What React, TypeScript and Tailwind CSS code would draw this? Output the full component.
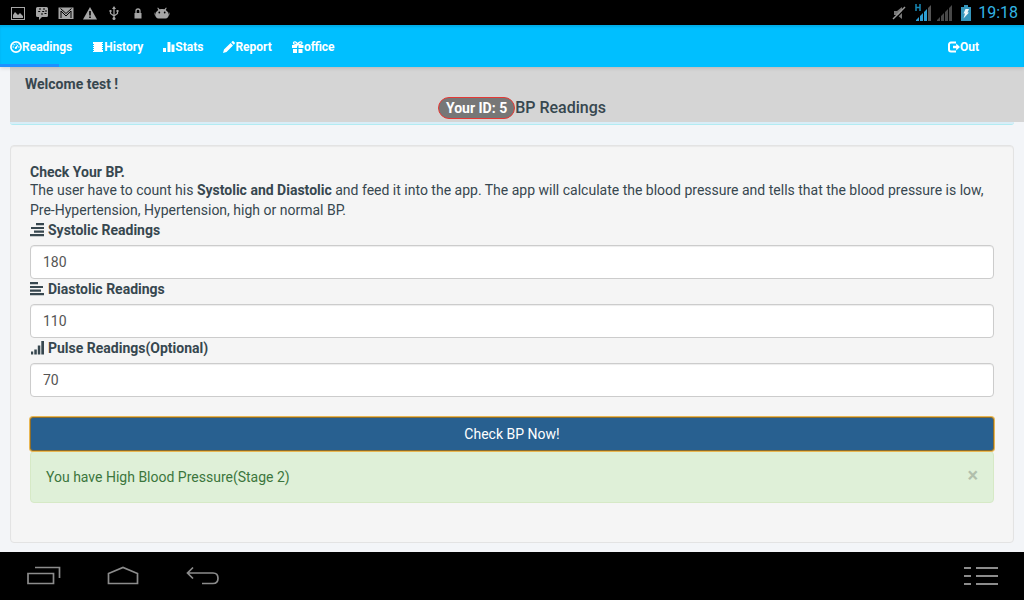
import { useState } from "react";
import type { ReactNode } from "react";

type IconProps = { children: ReactNode; className?: string; box?: string };

function Icon({ children, className = "size-3", box = "0 0 12 12" }: IconProps) {
  return (
    <svg viewBox={box} className={`shrink-0 ${className}`} fill="currentColor" aria-hidden="true">
      {children}
    </svg>
  );
}

const GaugeIcon = () => (
  <Icon>
    <circle cx="6" cy="6" r="5.100" fill="none" stroke="currentColor" strokeWidth="1.700" />
    <path d="M8.600 3 6.900 6.900a1.100 1.100 0 1 1-1.500-1z" />
    <circle cx="3.200" cy="6" r=".7" />
    <circle cx="4.100" cy="3.800" r=".7" />
    <circle cx="6.200" cy="3" r=".6" />
    <circle cx="8.900" cy="6" r=".7" />
  </Icon>
);

const FilmIcon = () => (
  <Icon>
    <path d="M1 1h10v1h-1v1h1v1h-1v1h1v1h-1v1h1v1h-1v1h1v2H1v-1h1V9H1V8h1V7H1V6h1V5H1V4h1V3H1z" />
  </Icon>
);

const StatsIcon = () => (
  <Icon>
    <path d="M0 7h3v4H0zM4.500 1h3v10h-3zM8.500 3.500h3V11h-3z" />
  </Icon>
);

const PencilIcon = () => (
  <Icon>
    <path d="m0 12 1-3.500L7.600 2 10 4.400 3.500 11zM8.300 1.300 9.300.3q.6-.5 1.200 0l1.200 1.200q.5.6 0 1.200l-1 1z" />
  </Icon>
);

const GiftIcon = () => (
  <Icon>
    <path
      d="M5.700 3.500C4.800.4 1.600.2 1.500 1.900c0 1.300 2 1.600 4.200 1.600C8 3.500 10 3.200 10 1.900 9.900.2 6.700.4 5.700 3.500z"
      fill="none"
      stroke="currentColor"
      strokeWidth="1.300"
    />
    <path d="M0 4h5v3H0zM6.500 4h5v3h-5zM1 8h4v4H1zM6.500 8h4v4h-4z" />
  </Icon>
);

const LogoutIcon = () => (
  <Icon>
    <path
      d="M8 1.500H3A2 2 0 0 0 1 3.500v5A2 2 0 0 0 3 10.500h5"
      fill="none"
      stroke="currentColor"
      strokeWidth="2"
    />
    <path d="M5 4.800h3.200V2.500L12 6 8.200 9.500V7.200H5z" />
  </Icon>
);

const AlignRightIcon = () => (
  <Icon className="size-3.5" box="0 0 14 14">
    <path d="M6 0h8v2.300H6zM1 4h13v2.100H1zM4 7.500h10v2.200H4zM0 11h14v2.300H0z" />
  </Icon>
);

const AlignLeftIcon = () => (
  <Icon className="size-3.5" box="0 0 14 14">
    <path d="M0 0h8v2.300H0zM0 4h13v2.100H0zM0 7.500h11v2.200H0zM0 11h14v2.300H0z" />
  </Icon>
);

const SignalIcon = () => (
  <Icon className="size-3.5" box="0 0 14 14">
    <path d="M1 10.500h2.200V13.500H1zM4.300 8.500h2.500v5H4.300zM7.800 4.500h2.500v9H7.800zM11.300 0H14v13.500h-2.700z" />
  </Icon>
);

function StatusBar() {
  return (
    <div className="flex h-[25px] items-center justify-between bg-black pl-2.5 pr-1.5 text-[#a6a6a6]">
      <div className="flex gap-2">
        <Icon className="size-4" box="0 0 16 16">
          <path d="M1 2h14v13H1zM2 3v11h12V3z" fillRule="evenodd" />
          <path d="M3 13V10l2-3 2 2 1 1 2-2 3 3v2z" />
        </Icon>
        <Icon className="size-4" box="0 0 16 16">
          <path d="M3.500 2h9Q14 2 14 3.500v7Q14 12 12.500 12H8l-3 3v-3H3.500Q2 12 2 10.500v-7Q2 2 3.500 2z" />
          <path d="M5 4h2M9 4h2M4.200 6.500h2M8.200 6.500h2M11 6h2M7 9h2M10.500 8.500h2" stroke="#000" strokeWidth="1.100" />
        </Icon>
        <Icon className="size-4" box="0 0 16 16">
          <path d="M.5 2.500h15v11.500H.5z" />
          <path d="M3 13V6l5 5 5-5v7M2.500 3.500l5.500 5 5.500-5" fill="none" stroke="#000" strokeWidth="1" />
        </Icon>
        <Icon className="size-4" box="0 0 16 16">
          <path d="M8 2 15 14.500H1z" />
          <path d="M7.200 6h1.600v4.500H7.200zM7.200 11.500h1.600V13H7.200z" fill="#000" />
        </Icon>
        <Icon className="size-4" box="0 0 16 16">
          <path d="M8 3v11M4.500 6.500v2L8 11l3.500-2.500v-2" fill="none" stroke="currentColor" strokeWidth="1.200" />
          <path d="m8 1 2 3H6zM3.500 5h2v2h-2zM10.500 5h2v2h-2z" />
          <circle cx="8" cy="13.500" r="1.500" />
        </Icon>
        <Icon className="size-4" box="0 0 16 16">
          <path d="M4.500 8h7v5.500h-7z" />
          <path d="M6 8V6a2 2 0 0 1 4 0v2" fill="none" stroke="currentColor" strokeWidth="1.300" />
        </Icon>
        <Icon className="size-4" box="0 0 16 16">
          <path d="M4 2.500 5.500 4.300q2.500-.8 5 0L12 2.500l.7.500-1 1.900q2.800 1.600 3 4.800 0 3.300-3.200 3.800l-3.500.1-3.500-.1Q1.300 13 1.300 9.700q.2-3.200 3-4.800L3.300 3zM1.200 7Q-.2 8.500 1.200 11zM14.800 7q1.400 1.500 0 4z" />
          <circle cx="5.300" cy="7.500" r=".9" fill="#000" />
          <circle cx="10.700" cy="7.500" r=".9" fill="#000" />
        </Icon>
      </div>
      <div className="flex items-center">
        <Icon className="mr-2 h-4 w-4 text-[#777]" box="0 0 16 16">
          <path d="M3 6h3l5-4v12l-5-4H3z" />
          <path d="M3.500 14.500 15 3" stroke="#000" strokeWidth="1.500" />
          <path d="M2 14 14 2" stroke="#999" strokeWidth="1.500" />
        </Icon>
        <Icon className="mr-1 h-[18px] w-[18px] text-[#2d9ed4]" box="0 0 18 18">
          <path d="M1 0v7M5 0v7M1 3.500h4" stroke="#1788b5" strokeWidth="1.500" />
          <path d="M1 17v-1l3-3v4zM5 17v-5l3-3v8zM9 17V8l3-3v12z" />
          <path d="M13 17V4l3-3v16z" fill="#555" />
        </Icon>
        <Icon className="mr-2 h-[18px] w-4 text-[#484848]" box="0 0 16 18">
          <path d="M0 17v-1l3-3v4zM4 17v-5l3-3v8zM8 17V8l3-3v12zM12 17V4l3-3v16z" />
        </Icon>
        <Icon className="mr-[7px] h-4 w-2.5 text-[#3595bb]" box="0 0 10 16">
          <path d="M3 0h4v2h3v14H0V2h3z" />
          <path d="M4.500 4H8L6.500 7.500H8L2.500 13.500l1.500-5H2.500z" fill="#eef7fa" />
        </Icon>
        <time className="text-base leading-6 text-[#33b5e5]">19:18</time>
      </div>
    </div>
  );
}

const tabs = [
  { label: "Readings", icon: <GaugeIcon /> },
  { label: "History", icon: <FilmIcon /> },
  { label: "Stats", icon: <StatsIcon /> },
  { label: "Report", icon: <PencilIcon /> },
  { label: "office", icon: <GiftIcon /> },
];

function NavBar() {
  return (
    <nav className="relative z-10 flex h-[42px] items-center justify-between bg-[#00bfff] pr-[35px] pt-0.5 text-xs font-bold text-white shadow-[0_1px_4px_rgba(0,0,0,0.15),inset_0_2px_2px_rgba(0,0,0,0.1)]">
      <div className="flex">
        {tabs.map((tab) => (
          <a key={tab.label} href="#" className="flex items-center px-2.5">
            {tab.icon}
            {tab.label}
          </a>
        ))}
      </div>
      <a href="#" className="flex items-center px-2.5">
        <LogoutIcon />
        Out
      </a>
      <span className="absolute bottom-0 left-0 h-[3px] w-[59px] bg-[#1e90ff]" />
    </nav>
  );
}

type FieldProps = { id: string; label: string; icon: ReactNode; initial: string };

function Field({ id, label, icon, initial }: FieldProps) {
  const [value, setValue] = useState(initial);
  return (
    <div>
      <label htmlFor={id} className="mb-[5px] flex h-5 items-center gap-1 font-bold">
        {icon}
        {label}
      </label>
      <input
        id={id}
        inputMode="numeric"
        value={value}
        onChange={(e) => setValue(e.target.value)}
        className="block h-[34px] w-full rounded border border-[#ccc] bg-white px-3 text-[#555] shadow-[inset_0_1px_1px_rgba(0,0,0,0.075)] outline-none"
      />
    </div>
  );
}

function SystemBar() {
  return (
    <div className="flex h-12 items-center justify-between bg-black px-6 text-[#8c8c8c]">
      <div className="flex gap-10">
        <button aria-label="Recent apps">
          <svg viewBox="0 0 40 24" className="h-6 w-10" fill="none" stroke="currentColor" strokeWidth="1.700">
            <path d="M4 9.500h25.500v10H4zM11 3.500h24.500V14" />
          </svg>
        </button>
        <button aria-label="Home">
          <svg viewBox="0 0 40 24" className="h-6 w-10" fill="none" stroke="currentColor" strokeWidth="1.700">
            <path d="M4.500 19.500v-10L19 3.500l14.500 6v10z" />
          </svg>
        </button>
        <button aria-label="Back">
          <svg viewBox="0 0 40 24" className="h-6 w-10" fill="none" stroke="currentColor" strokeWidth="1.700">
            <path d="M9 3.500 3.500 9 9 14.500M3.500 9H29q5 0 5 5.200t-5 5.300H18" />
          </svg>
        </button>
      </div>
      <button aria-label="Menu">
        <svg viewBox="0 0 36 20" className="h-5 w-9" fill="currentColor">
          <path d="M0 1h7v2H0zM12 1h22v2H12zM0 9h7v2H0zM12 9h22v2H12zM0 17h7v2H0zM12 17h22v2H12z" />
        </svg>
      </button>
    </div>
  );
}

export default function App() {
  const [showResult, setShowResult] = useState(true);
  return (
    <div className="flex min-h-screen flex-col bg-[#f3f5f8] font-['Roboto',sans-serif] text-sm leading-5 text-[#37474f]">
      <StatusBar />
      <NavBar />
      <main className="flex-1 pb-[9px] pl-2.5">
        <header className="bg-[#d5d5d5] px-[15px] pb-[3px] pt-[7px]">
          <p className="font-bold">Welcome test !</p>
          <h1 className="mt-[3px] flex items-center justify-center pl-2.5 text-base leading-[22px] font-medium">
            <span className="rounded-full border border-[#e53935] bg-[#777] px-[7px] text-sm leading-5 font-bold text-white">
              Your ID: 5
            </span>
            BP Readings
          </h1>
        </header>
        <div className="mr-2.5 h-[3px] rounded-b border-b border-[#b2ebf2] bg-[#d9edf7]" />

        <section className="mr-2.5 mt-5 rounded border border-[#e3e3e3] bg-[#f5f5f5] px-[19px] pb-[39px] pt-[19px] shadow-[inset_0_1px_1px_rgba(0,0,0,0.05)]">
          <h2 className="leading-[15px] font-bold">Check Your BP.</h2>
          <p>
            The user have to count his <strong>Systolic and Diastolic</strong> and feed it into the app. The app will
            calculate the blood pressure and tells that the blood pressure is low, Pre-Hypertension, Hypertension, high
            or normal BP.
          </p>
          <form onSubmit={(e) => e.preventDefault()}>
            <Field id="systolic" label="Systolic Readings" icon={<AlignRightIcon />} initial="180" />
            <Field id="diastolic" label="Diastolic Readings" icon={<AlignLeftIcon />} initial="110" />
            <Field id="pulse" label="Pulse Readings(Optional)" icon={<SignalIcon />} initial="70" />
            <button
              onClick={() => setShowResult(true)}
              className="relative mt-5 block h-[34px] w-full rounded-[3px] border border-[#8a6d2f] bg-[#286090] text-white shadow-[0_0_0_1px_#e9b752]"
            >
              Check BP Now!
            </button>
          </form>
          {showResult && (
            <div
              role="alert"
              className="flex items-start justify-between rounded border border-[#d6e9c6] bg-[#dff0d8] px-[15px] py-[15px] text-[#3c763d]"
            >
              <span>You have High Blood Pressure(Stage 2)</span>
              <button
                aria-label="Close"
                onClick={() => setShowResult(false)}
                className="text-xl leading-4 font-bold text-black opacity-20"
              >
                ×
              </button>
            </div>
          )}
        </section>
      </main>
      <SystemBar />
    </div>
  );
}
